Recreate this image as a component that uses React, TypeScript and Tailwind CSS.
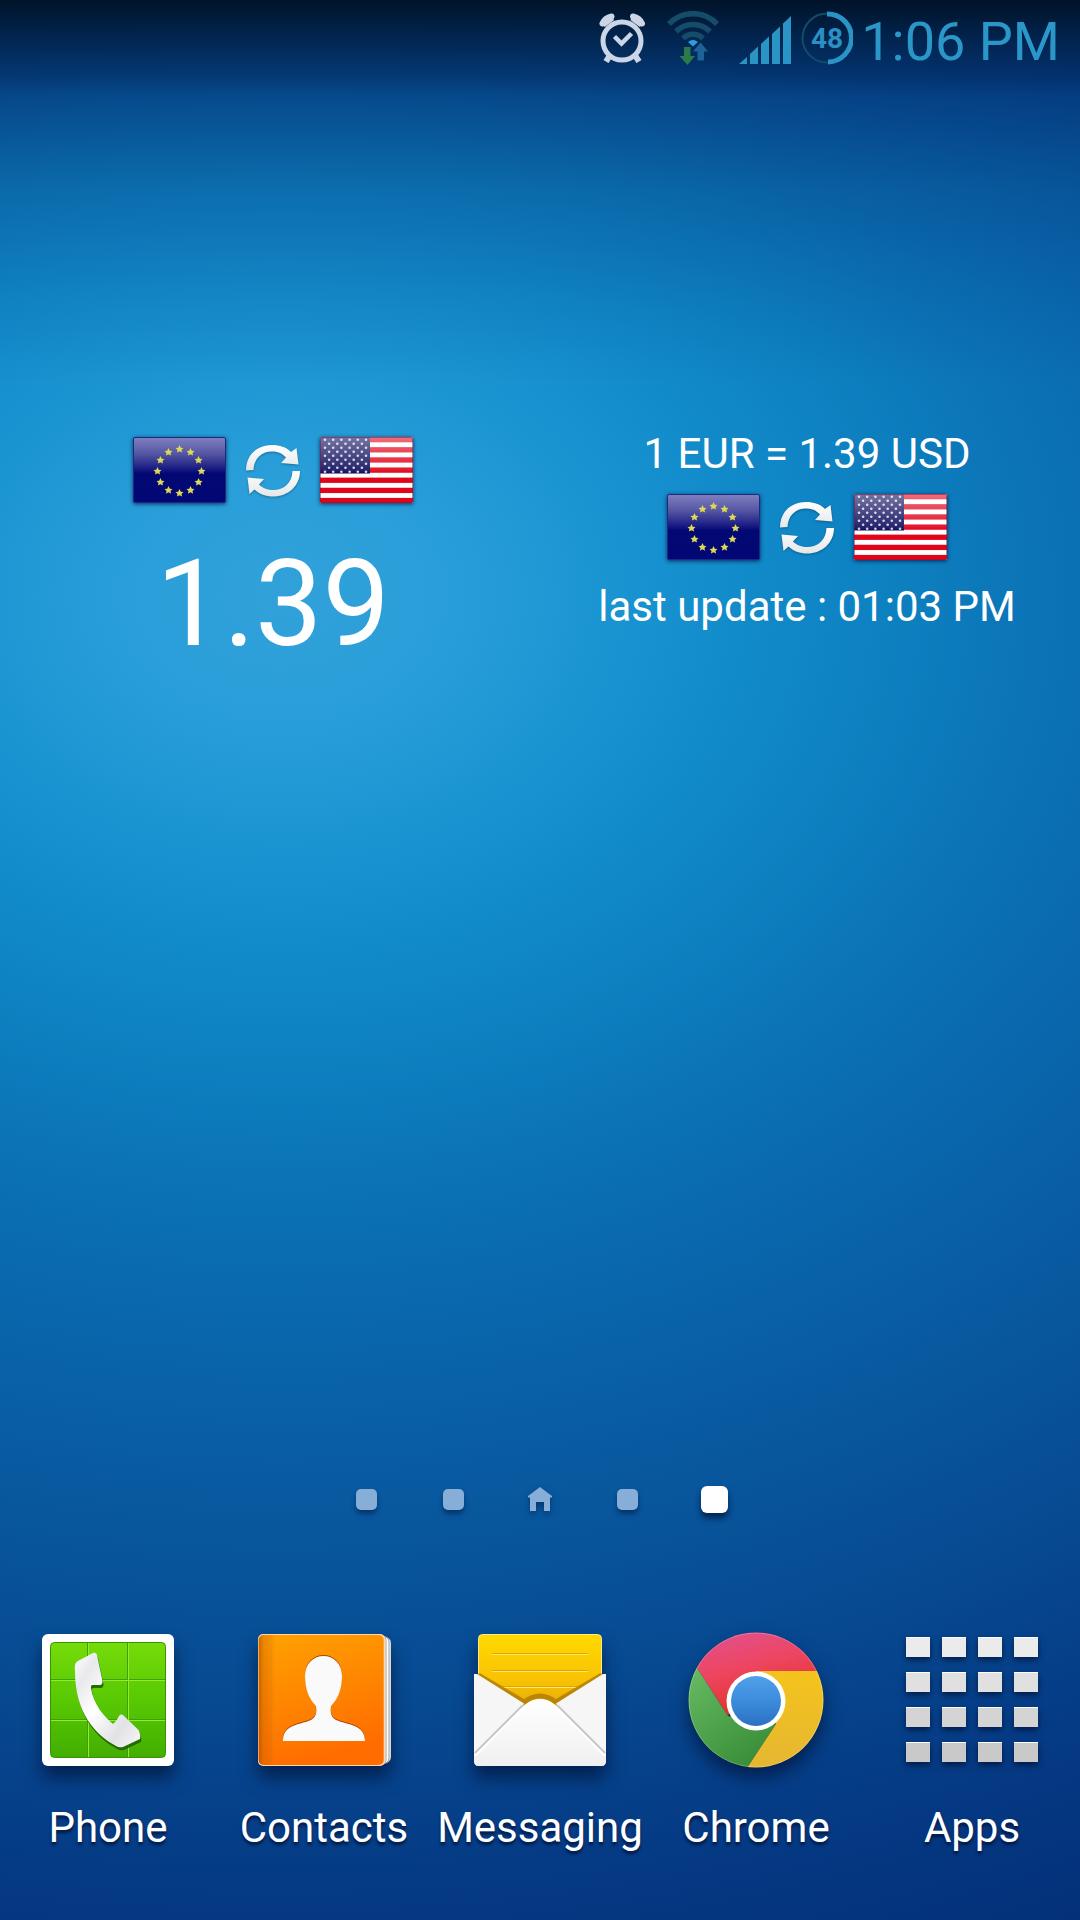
import React from 'react';

const AlarmIcon: React.FC = () => (
    <svg width="48" height="50" viewBox="0 0 48 50" fill="none" stroke="#ccd5e6" aria-label="Alarm set">
        <circle cx="23" cy="28" r="19" strokeWidth="5" />
        <path d="M15.500 23.500 L22.500 30.500 L32.500 20.500" strokeWidth="4.500" />
        <path d="M3.500 10.500 Q6 5 12.500 3.500" strokeWidth="6" strokeLinecap="round" />
        <path d="M4.500 12.500 L14 5.500" strokeWidth="4" />
        <path d="M43 10.500 Q40.500 5 34 3.500" strokeWidth="6" strokeLinecap="round" />
        <path d="M42 12.500 L32.500 5.500" strokeWidth="4" />
        <path d="M10.500 43 L7 48.500 M36.500 43 L40 48.500" strokeWidth="6" />
    </svg>
);

const WifiIcon: React.FC = () => (
    <svg width="52" height="54" viewBox="0 0 52 54" fill="none" aria-label="Wi-Fi">
        <g stroke="#154c69" strokeWidth="5.500">
            <path d="M2 13 A33 33 0 0 1 50 13" />
            <path d="M9 20.500 A24 24 0 0 1 43 20.500" />
            <path d="M16 27.500 A14 14 0 0 1 36 27.500" />
        </g>
        <path d="M21 31 Q26 27 31 31 L26 35.500 Z" fill="#2a9fe0" />
        <path d="M17 36 H23.500 V45 H28 L20.500 54 L12.500 45 H17 Z" fill="#2b7a4a" />
        <path d="M33.500 31.500 L41 40.500 H37 V49.500 H30.500 V40.500 H26 Z" fill="#1d639a" />
    </svg>
);

const SignalIcon: React.FC = () => (
    <svg width="52" height="48" viewBox="0 0 52 48" fill="#2a95c5" aria-label="Signal">
        <path d="M0 48 L8 41 V48 Z" />
        <path d="M11 48 V38 L19 30.500 V48 Z" />
        <path d="M22 48 V28 L30 20.500 V48 Z" />
        <path d="M33 48 V18 L41 10.500 V48 Z" />
        <path d="M44 48 V7.500 L52 0 V48 Z" />
    </svg>
);

const BatteryIcon: React.FC = () => (
    <svg width="52" height="54" viewBox="0 0 52 54" fill="none" aria-label="Battery">
        <circle cx="26" cy="27" r="24.500" stroke="#134a68" strokeWidth="2" />
        <path d="M26 3 A24 24 0 0 1 27 51" stroke="#2a95c5" strokeWidth="5" />
        <text x="26" y="37" textAnchor="middle" fontFamily="Roboto, sans-serif" fontSize="28" fontWeight="700" fill="#2a8fc2">
            48
        </text>
    </svg>
);

const StatusBar: React.FC = () => (
    <header className="h-[76px] flex items-center justify-end pr-5">
        <AlarmIcon />
        <span className="ml-5"><WifiIcon /></span>
        <span className="ml-5 pt-1"><SignalIcon /></span>
        <span className="ml-2.5"><BatteryIcon /></span>
        <time className="ml-2 pt-2 text-[54px] leading-[64px] text-[#2b97c8]">1:06 PM</time>
    </header>
);

const starAngles = Array.from({ length: 12 }, (_, i) => (i * Math.PI) / 6);
const STAR = 'M0 -4 L1.300 -1.200 L4 -1 L2 1 L2.600 3.600 L0 2.200 L-2.600 3.600 L-2 1 L-4 -1 L-1.300 -1.200 Z';

const EuFlag: React.FC = () => (
    <svg width="93" height="66" viewBox="0 0 93 66" className="drop-shadow-[0_1px_2px_rgba(0,0,40,0.7)]" aria-label="Euro">
        <defs>
            <linearGradient id="euGloss" x1="0" y1="0" x2="0" y2="1">
                <stop offset="0" stopColor="#7f7fc0" />
                <stop offset=".25" stopColor="#5556a2" />
                <stop offset=".5" stopColor="#141680" />
                <stop offset=".55" stopColor="#020873" />
                <stop offset="1" stopColor="#020775" />
            </linearGradient>
        </defs>
        <rect x=".5" y=".5" width="92" height="65" rx="1.500" fill="url(#euGloss)" stroke="#1a2a80" />
        {starAngles.map((a) => (
            <path
                key={a}
                d={STAR}
                fill="#ddd855"
                transform={`translate(${46.5 + 22 * Math.sin(a)} ${34 - 22 * Math.cos(a)})`}
            />
        ))}
    </svg>
);

const UsFlag: React.FC = () => (
    <svg width="93" height="66" viewBox="0 0 93 66" className="drop-shadow-[0_1px_2px_rgba(0,0,40,0.7)]" aria-label="US Dollar">
        <defs>
            <linearGradient id="usGloss" x1="0" y1="0" x2="0" y2="1">
                <stop offset="0" stopColor="#fff" stopOpacity=".42" />
                <stop offset=".5" stopColor="#fff" stopOpacity=".08" />
                <stop offset=".54" stopColor="#fff" stopOpacity="0" />
            </linearGradient>
            <clipPath id="usClip"><rect width="93" height="66" rx="1.500" /></clipPath>
        </defs>
        <g clipPath="url(#usClip)">
            <rect width="93" height="66" fill="#fff" />
            {[0, 1, 2, 3, 4, 5, 6].map((i) => (
                <rect key={i} y={i * 10.15} width="93" height="5.3" fill="#e1051b" />
            ))}
            <rect width="50" height="36.500" fill="#12125f" />
            {[0, 1, 2, 3, 4, 5, 6, 7, 8].map((row) =>
                Array.from({ length: row % 2 ? 5 : 6 }, (_, col) => (
                    <circle key={`${row}-${col}`} cx={5 + col * 8.2 + (row % 2 ? 4.1 : 0)} cy={2.700 + row * 4} r="1.300" fill="#cfd0e8" />
                ))
            )}
            <rect width="93" height="66" fill="url(#usGloss)" />
            <rect x=".5" y=".5" width="92" height="65" rx="1.500" fill="none" stroke="#8b1030" strokeOpacity=".5" />
        </g>
    </svg>
);

const RefreshIcon: React.FC = () => (
    <svg width="54" height="54" viewBox="0 0 54 54" className="drop-shadow-[0_1px_1px_rgba(0,0,0,0.3)]">
        <defs>
            <linearGradient id="refreshFill" x1="0" y1="0" x2="0" y2="1">
                <stop offset="0" stopColor="#fff" />
                <stop offset="1" stopColor="#e4e6e8" />
            </linearGradient>
        </defs>
        <g fill="url(#refreshFill)">
            <path d="M0 27.500 C0 12 11 2 26 2 C34 2 40 4 45 9 L50.500 5 L52.500 21.500 L35 20 L40 14.500 C36 10 31 8.500 26 8.500 C15 8.500 8 16 7.500 27 Z" />
            <path d="M54 28 C54 43 42 53.500 27 53.500 C20 53.500 13 51 8.500 46.500 L3.500 51 L1.500 34.500 L18 36 L13 41.500 C17 45.500 22 47 27 47 C38 47 46 40 46.500 28 Z" />
        </g>
    </svg>
);

const CurrencyPair: React.FC = () => (
    <div className="flex items-center gap-5">
        <EuFlag />
        <button type="button" aria-label="Refresh rate"><RefreshIcon /></button>
        <UsFlag />
    </div>
);

const PageIndicator: React.FC = () => (
    <nav className="flex items-center justify-center" aria-label="Home screen pages">
        {['1', '2', 'home', '4', '5'].map((page) => (
            <button key={page} type="button" aria-label={`Page ${page}`} className="w-[87px] h-7 flex items-center justify-center">
                {page === 'home' && (
                    <svg width="24" height="24" viewBox="0 0 24 24" className="drop-shadow-[0_3px_3px_rgba(0,20,60,0.5)]">
                        <path d="M12 0 L24 9 V10.500 H22 V24 H16 V15 H8 V24 H2 V10.500 H0 V9 Z" fill="#86aed6" />
                    </svg>
                )}
                {page === '5' && <span className="size-[27px] rounded-md bg-white shadow-[0_5px_6px_rgba(0,15,50,0.7)]" />}
                {page !== 'home' && page !== '5' && (
                    <span className="size-[21px] rounded-[5px] bg-[#86aed6] shadow-[0_4px_5px_rgba(0,20,60,0.5)]" />
                )}
            </button>
        ))}
    </nav>
);

const PhoneIcon: React.FC = () => (
    <svg width="132" height="132" viewBox="0 0 132 132">
        <defs>
            <linearGradient id="phoneGreen" x1="0" y1="0" x2="0" y2="1">
                <stop offset="0" stopColor="#76db0a" />
                <stop offset=".5" stopColor="#58c903" />
                <stop offset="1" stopColor="#43ae01" />
            </linearGradient>
            <linearGradient id="handset" x1="0" y1="0" x2="1" y2="1">
                <stop offset="0" stopColor="#fff" />
                <stop offset=".2" stopColor="#e9e9ed" />
                <stop offset=".45" stopColor="#fff" />
                <stop offset=".75" stopColor="#e2e2e6" />
                <stop offset="1" stopColor="#f8f8f8" />
            </linearGradient>
        </defs>
        <rect width="132" height="132" rx="6" fill="#fff" />
        <rect x="8.500" y="8.500" width="115" height="115" rx="4" fill="url(#phoneGreen)" stroke="#379600" />
        <path d="M45.500 9 V123 M85.500 9 V123 M9 45.500 H123 M9 85.500 H123" stroke="#3fa003" />
        <path d="M46.500 9 V123 M86.500 9 V123 M9 46.500 H123 M9 86.500 H123" stroke="#93e838" />
        <path
            d="M35 27.500 L51 19 Q54 18 55 21 L60.500 47 Q60.500 51 58 51 H50.500 Q48.500 51 49 54 C51 69 61 82 71 90 L74.500 86.500 L77 82 Q79 79.500 81.500 81.500 L96.500 96 Q99 101 98 105 L81 113 Q77 114 74 112 C54 101 33 80 33 37 Q32 30 35 27.500 Z"
            fill="url(#handset)"
            className="drop-shadow-[1px_3px_0_rgba(30,100,0,0.9)]"
        />
    </svg>
);

const ContactsIcon: React.FC = () => (
    <svg width="133" height="132" viewBox="0 0 133 132">
        <defs>
            <linearGradient id="bookCover" x1="0" y1="0" x2=".3" y2="1">
                <stop offset="0" stopColor="#ffa200" />
                <stop offset=".4" stopColor="#ff8d00" />
                <stop offset="1" stopColor="#ff6d00" />
            </linearGradient>
            <linearGradient id="bookSpine" x1="0" y1="0" x2="1" y2="0">
                <stop offset="0" stopColor="#a84a00" stopOpacity=".65" />
                <stop offset=".04" stopColor="#c55a00" stopOpacity=".35" />
                <stop offset=".1" stopColor="#c55a00" stopOpacity=".2" />
                <stop offset=".15" stopColor="#ff9a20" stopOpacity="0" />
            </linearGradient>
        </defs>
        <rect x="20" y="3" width="113" height="126" rx="6" fill="#f2f2f2" stroke="#7c7c80" strokeWidth=".5" />
        <rect x="18" y="2" width="113" height="128" rx="6" fill="#fff" stroke="#77777c" strokeWidth=".7" />
        <rect x="16" y="1" width="112" height="130" rx="5" fill="#fff" stroke="#77777c" strokeWidth=".7" />
        <rect width="127" height="132" rx="5" fill="#ffd7a8" />
        <rect x=".7" y="1" width="125" height="130" rx="5" fill="url(#bookCover)" />
        <rect x=".7" y="1" width="125" height="130" rx="5" fill="url(#bookSpine)" />
        <path
            d="M65.500 22 C75 22 84 29 84 42 C84 53 81 64 73 72 C72 79 73 83 78 86 C89 91 107 90 107 107 H25 C25 90 42 91 53 86 C58 83 59 79 58 72 C50 64 47 53 47 42 C47 29 56 22 65.500 22 Z"
            fill="#fafafa"
            className="drop-shadow-[0_-1px_0_#a44a00]"
        />
    </svg>
);

const MessagingIcon: React.FC = () => (
    <svg width="132" height="132" viewBox="0 0 132 132">
        <defs>
            <linearGradient id="paper" x1="0" y1="0" x2="0" y2="1">
                <stop offset="0" stopColor="#ffd900" />
                <stop offset=".6" stopColor="#f8c303" />
                <stop offset="1" stopColor="#e6a908" />
            </linearGradient>
            <linearGradient id="envelope" x1="0" y1="0" x2="0" y2="1">
                <stop offset="0" stopColor="#fff" />
                <stop offset="1" stopColor="#f0f0f2" />
            </linearGradient>
        </defs>
        <rect x="4.500" y=".5" width="123" height="75" rx="4" fill="url(#paper)" stroke="#ffe88a" />
        <path d="M18 19.500 H114 M18 36.500 H114 M28 52.500 H104" stroke="#e2a600" />
        <path d="M18 20.500 H114 M18 37.500 H114 M28 53.500 H104" stroke="#ffe670" />
        <path d="M4 41 L50 68 Q66 56 82 68 L128 41" fill="none" stroke="#a87608" strokeOpacity=".75" strokeWidth="5" />
        <path d="M0 40 H3 L50 69.500 L40 90 H92 L82 69.500 L129 40 H132 V127 Q132 132 127 132 H5 Q0 132 0 127 Z" fill="#f6f6f7" />
        <path d="M1 119 L49 71 M131 119 L83 71" stroke="#c6c6c9" strokeWidth="2" />
        <path d="M0 122 L51 71 Q66 59 81 71 L132 122 V127 Q132 132 127 132 H5 Q0 132 0 127 Z" fill="url(#envelope)" />
        <path d="M1 122 L51 72 Q66 60 81 72 L131 122" fill="none" stroke="#fff" strokeWidth="2" />
    </svg>
);

const ChromeIcon: React.FC = () => (
    <svg width="136" height="136" viewBox="0 0 136 136">
        <defs>
            <linearGradient id="chromeRed" x1=".3" y1="0" x2=".7" y2="1">
                <stop offset="0" stopColor="#e2508a" />
                <stop offset=".4" stopColor="#ee4560" />
                <stop offset="1" stopColor="#dc2c1e" />
            </linearGradient>
            <linearGradient id="chromeGreen" x1="0" y1="0" x2=".6" y2="1">
                <stop offset="0" stopColor="#6cc067" />
                <stop offset="1" stopColor="#3c8f3a" />
            </linearGradient>
            <linearGradient id="chromeYellow" x1="0" y1="0" x2="0" y2="1">
                <stop offset="0" stopColor="#f5c31c" />
                <stop offset="1" stopColor="#e5b733" />
            </linearGradient>
            <linearGradient id="chromeBlue" x1="0" y1="0" x2="0" y2="1">
                <stop offset="0" stopColor="#50a0ea" />
                <stop offset=".5" stopColor="#3c8cdc" />
                <stop offset="1" stopColor="#2a70c4" />
            </linearGradient>
            <clipPath id="chromeClip"><circle cx="68" cy="68" r="67.500" /></clipPath>
        </defs>
        <g clipPath="url(#chromeClip)">
            <path d="M0 0 H136 V39 H68 L40 84 L9 36 L0 22 Z" fill="url(#chromeRed)" />
            <path d="M0 22 L9 36 L40 84 L88 92 L59 136 H0 Z" fill="url(#chromeGreen)" />
            <path d="M136 39 V136 H59 L88 92 L68 69 V39 Z" fill="url(#chromeYellow)" />
            <circle cx="68" cy="68" r="67" fill="none" stroke="#fff" strokeOpacity=".25" />
        </g>
        <circle cx="68" cy="69" r="29.500" fill="#fff" />
        <circle cx="68" cy="69" r="25" fill="url(#chromeBlue)" />
    </svg>
);

const appRows = ['#ebebeb', '#e0e0e0', '#d4d4d4', '#c9c9c9'];

const AppsIcon: React.FC = () => (
    <svg width="132" height="126" viewBox="0 0 132 126" className="overflow-visible">
        {appRows.map((fill, row) =>
            [0, 36, 72, 108].map((x) => (
                <g key={`${fill}-${x}`}>
                    <rect x={x} y={row * 35} width="24" height="20" fill={fill} />
                    <rect x={x} y={row * 35} width="24" height="1" fill="#fff" />
                </g>
            ))
        )}
    </svg>
);

const dockApps = [
    { label: 'Phone', icon: <PhoneIcon />, shadow: 'drop-shadow-[0_12px_9px_rgba(0,10,40,0.6)]' },
    { label: 'Contacts', icon: <ContactsIcon />, shadow: 'drop-shadow-[0_12px_9px_rgba(0,10,40,0.6)]' },
    { label: 'Messaging', icon: <MessagingIcon />, shadow: 'drop-shadow-[0_12px_9px_rgba(0,10,40,0.6)]' },
    { label: 'Chrome', icon: <ChromeIcon />, shadow: 'drop-shadow-[0_10px_9px_rgba(0,10,40,0.6)]' },
    { label: 'Apps', icon: <AppsIcon />, shadow: 'drop-shadow-[0_3px_3px_rgba(0,10,40,0.7)]' },
];

const Dock: React.FC = () => (
    <footer className="grid grid-cols-5 pb-[68px]">
        {dockApps.map(({ label, icon, shadow }) => (
            <button key={label} type="button" className="flex flex-col items-center gap-9">
                <span className={`h-[136px] flex items-center justify-center ${shadow}`}>{icon}</span>
                <span className="text-[42px] leading-[48px] [text-shadow:0_3px_3px_rgba(0,10,40,0.7)]">{label}</span>
            </button>
        ))}
    </footer>
);

const App: React.FC = () => {
    return (
        <div className="min-h-screen flex flex-col text-white font-[Roboto,sans-serif] bg-[linear-gradient(180deg,rgba(0,16,36,0.97)_0%,rgba(0,24,62,0.85)_2%,rgba(0,24,80,0.66)_4%,rgba(0,24,90,0.5)_5%,rgba(0,24,90,0.32)_8%,rgba(0,24,90,0.22)_10%,rgba(0,24,90,0.14)_13%,rgba(0,24,90,0.07)_16%,rgba(0,24,90,0)_20%),radial-gradient(ellipse_162%_70%_at_26%_31%,#32a1d9_0%,#289ed9_10%,#1b95d2_18%,#118aca_27%,#0d80c0_35%,#0b74b7_43%,#0a6ab0_51%,#095fa4_62%,#074c94_80%,#053a84_96%,#032f78_110%)]">
            <StatusBar />

            {/* Currency widgets */}
            <main className="grow grid grid-cols-2 items-start px-[6px] pt-[354px]">
                <section className="flex flex-col items-center pt-[7px] gap-[41px]">
                    <CurrencyPair />
                    <p className="text-[120px] leading-[120px]">1.39</p>
                </section>
                <section className="flex flex-col items-center text-[42px] leading-[48px]">
                    <p className="mb-4">1 EUR = 1.39 USD</p>
                    <CurrencyPair />
                    <p className="mt-[23px]">last update : 01:03 PM</p>
                </section>
            </main>

            <div className="mb-[119px]">
                <PageIndicator />
            </div>
            <Dock />
        </div>
    );
};

export default App;
